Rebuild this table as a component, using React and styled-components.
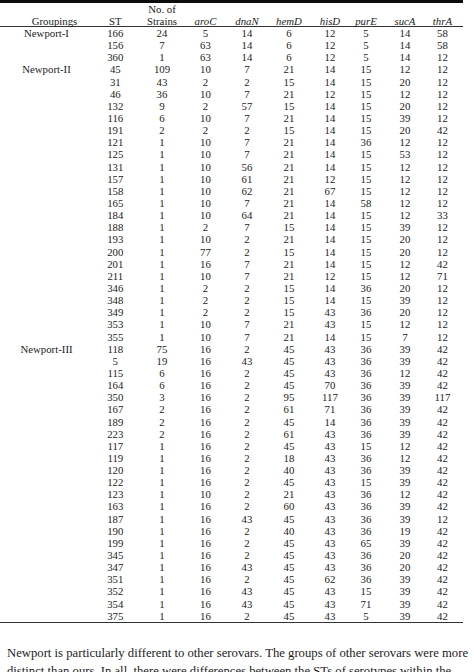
import styled, { createGlobalStyle } from "styled-components";

const GlobalStyle = createGlobalStyle`
  html, body {
    margin: 0;
    padding: 0;
    background: #fff;
  }
  body {
    font-family: "Liberation Serif", "Times New Roman", serif;
    color: #222;
    overflow: hidden;
  }
`;

// column tracks chosen so every column centre lines up with the scan
const TRACKS = "93px 44.6px 48.8px 38.2px 44.8px 39.2px 42.8px 29.2px 48.8px 26.2px 1fr";

const genes = ["aroC", "dnaN", "hemD", "hisD", "purE", "sucA", "thrA"];

const rows = [
  ["Newport-I", 166, 24, 5, 14, 6, 12, 5, 14, 58],
  ["", 156, 7, 63, 14, 6, 12, 5, 14, 58],
  ["", 360, 1, 63, 14, 6, 12, 5, 14, 12],
  ["Newport-II", 45, 109, 10, 7, 21, 14, 15, 12, 12],
  ["", 31, 43, 2, 2, 15, 14, 15, 20, 12],
  ["", 46, 36, 10, 7, 21, 12, 15, 12, 12],
  ["", 132, 9, 2, 57, 15, 14, 15, 20, 12],
  ["", 116, 6, 10, 7, 21, 14, 15, 39, 12],
  ["", 191, 2, 2, 2, 15, 14, 15, 20, 42],
  ["", 121, 1, 10, 7, 21, 14, 36, 12, 12],
  ["", 125, 1, 10, 7, 21, 14, 15, 53, 12],
  ["", 131, 1, 10, 56, 21, 14, 15, 12, 12],
  ["", 157, 1, 10, 61, 21, 12, 15, 12, 12],
  ["", 158, 1, 10, 62, 21, 67, 15, 12, 12],
  ["", 165, 1, 10, 7, 21, 14, 58, 12, 12],
  ["", 184, 1, 10, 64, 21, 14, 15, 12, 33],
  ["", 188, 1, 2, 7, 15, 14, 15, 39, 12],
  ["", 193, 1, 10, 2, 21, 14, 15, 20, 12],
  ["", 200, 1, 77, 2, 15, 14, 15, 20, 12],
  ["", 201, 1, 16, 7, 21, 14, 15, 12, 42],
  ["", 211, 1, 10, 7, 21, 12, 15, 12, 71],
  ["", 346, 1, 2, 2, 15, 14, 36, 20, 12],
  ["", 348, 1, 2, 2, 15, 14, 15, 39, 12],
  ["", 349, 1, 2, 2, 15, 43, 36, 20, 12],
  ["", 353, 1, 10, 7, 21, 43, 15, 12, 12],
  ["", 355, 1, 10, 7, 21, 14, 15, 7, 12],
  ["Newport-III", 118, 75, 16, 2, 45, 43, 36, 39, 42],
  ["", 5, 19, 16, 43, 45, 43, 36, 39, 42],
  ["", 115, 6, 16, 2, 45, 43, 36, 12, 42],
  ["", 164, 6, 16, 2, 45, 70, 36, 39, 42],
  ["", 350, 3, 16, 2, 95, 117, 36, 39, 117],
  ["", 167, 2, 16, 2, 61, 71, 36, 39, 42],
  ["", 189, 2, 16, 2, 45, 14, 36, 39, 42],
  ["", 223, 2, 16, 2, 61, 43, 36, 39, 42],
  ["", 117, 1, 16, 2, 45, 43, 15, 12, 42],
  ["", 119, 1, 16, 2, 18, 43, 36, 12, 42],
  ["", 120, 1, 16, 2, 40, 43, 36, 39, 42],
  ["", 122, 1, 16, 2, 45, 43, 15, 39, 42],
  ["", 123, 1, 10, 2, 21, 43, 36, 12, 42],
  ["", 163, 1, 16, 2, 60, 43, 36, 39, 42],
  ["", 187, 1, 16, 43, 45, 43, 36, 39, 12],
  ["", 190, 1, 16, 2, 40, 43, 36, 19, 42],
  ["", 199, 1, 16, 2, 45, 43, 65, 39, 42],
  ["", 345, 1, 16, 2, 45, 43, 36, 20, 42],
  ["", 347, 1, 16, 43, 45, 43, 36, 20, 42],
  ["", 351, 1, 16, 2, 45, 62, 36, 39, 42],
  ["", 352, 1, 16, 43, 45, 43, 15, 39, 42],
  ["", 354, 1, 16, 43, 45, 43, 71, 39, 42],
  ["", 375, 1, 16, 2, 45, 43, 5, 39, 42],
];

const Page = styled.div`
  width: 474px;
  height: 672px;
  overflow: hidden;
`;

const Table = styled.div`
  width: 463px;
  border-top: 3px solid #0c0c0c;
  border-bottom: 1px solid #333;
  font-size: 10.8px;
`;

const HeadRow = styled.div`
  display: grid;
  grid-template-columns: ${TRACKS};
  align-items: end;
  height: 23px;
  border-bottom: 1px solid #333;
  line-height: 12px;
`;

const HeadCell = styled.div`
  text-align: center;
  font-style: ${(p) => (p.$gene ? "italic" : "normal")};
  padding-left: ${(p) => p.$shift || 0}px;
`;

const Body = styled.div`
  display: flex;
  flex-direction: column;
`;

const Row = styled.div`
  display: grid;
  grid-template-columns: ${TRACKS};
  height: 12.15px;
  line-height: 12.15px;
`;

const Cell = styled.div`
  text-align: center;
  white-space: nowrap;
`;

const Para = styled.p`
  margin: 21px 0 0;
  padding-left: 7px;
  width: 466px;
  font-size: 12.7px;
  line-height: 18px;
  color: #1c1c1c;
`;

export default function App() {
  return (
    <Page>
      <GlobalStyle />
      <Table>
        <HeadRow>
          <HeadCell $shift={16}>Groupings</HeadCell>
          <HeadCell>ST</HeadCell>
          <HeadCell>
            No. of
            <br />
            Strains
          </HeadCell>
          {genes.map((g) => (
            <HeadCell key={g} $gene>
              {g}
            </HeadCell>
          ))}
          <span />
        </HeadRow>
        <Body>
          {rows.map((r, i) => (
            <Row key={i}>
              {r.map((v, j) => (
                <Cell key={j}>{v}</Cell>
              ))}
              <span />
            </Row>
          ))}
        </Body>
      </Table>
      <Para>
        Newport is particularly different to other serovars. The groups of other serovars were more
        distinct than ours. In all, there were differences between the STs of serotypes within the
        same group.
      </Para>
    </Page>
  );
}
